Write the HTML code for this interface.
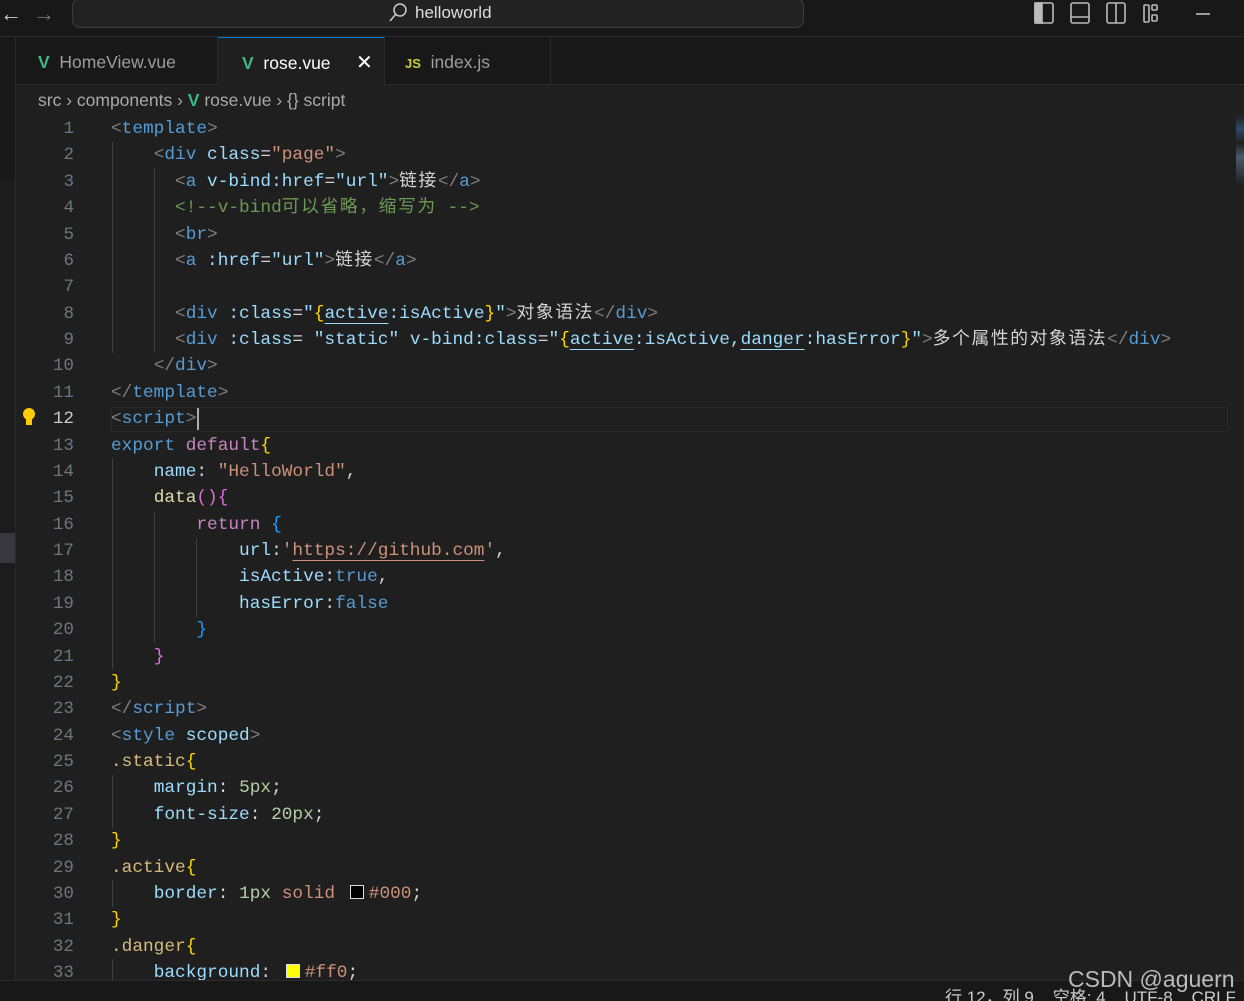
<!DOCTYPE html>
<html><head><meta charset="utf-8"><style>
*{margin:0;padding:0;box-sizing:border-box}
html,body{width:1244px;height:1001px;overflow:hidden}
body{background:#1f1f1f;position:relative;font-family:"Liberation Sans","Noto Sans CJK SC",sans-serif;color:#ccc}
.abs{position:absolute}
#title{left:0;top:0;width:1244px;height:37px;background:#181818;border-bottom:1px solid #2b2b2b}
#search{left:72px;top:-2px;width:732px;height:30px;border:1px solid #3c3c3c;border-radius:8px;background:#222}
#tabs{left:16px;top:37px;width:1228px;height:48px;background:#181818;border-bottom:1px solid #2b2b2b}
.tab{position:absolute;top:0;height:48px;border-right:1px solid #2b2b2b;font-size:17.5px;line-height:50px;color:#9d9d9d}
#side{left:0;top:37px;width:16px;height:944px;background:#1c1c1c;border-right:1px solid #2b2b2b}
#status{left:0;top:980px;width:1244px;height:21px;background:#181818;border-top:1px solid #2b2b2b}
.code{position:absolute;left:0;top:116px;font-family:"Liberation Mono","Noto Sans CJK SC",monospace;font-size:17.8px;line-height:26.375px;white-space:pre;color:#d4d4d4}
.ln{position:absolute;left:20px;width:54px;text-align:right;top:116px;font-family:"Liberation Mono",monospace;font-size:17.6px;line-height:26.375px;color:#6e7681;white-space:pre}
.b{color:#808080}.t{color:#569cd6}.a{color:#9cdcfe}.s{color:#ce9178}.c{color:#6a9955}.k{color:#c586c0}.f{color:#dcdcaa}
.y{color:#ffd700}.p{color:#da70d6}.bl{color:#179fff}.n{color:#b5cea8}.sel{color:#d7ba7d}
.u{text-decoration:underline;text-underline-offset:5px}
.z{letter-spacing:1.6px}
.g{position:absolute;width:1px;background:#404040}
.sw{display:inline-block;width:14px;height:14px;border:1px solid #ddd;vertical-align:-1px;margin-left:4px;margin-right:5px}
</style></head><body>
<div id="title" class="abs"></div>
<div class="abs" style="left:0;top:1px;font-size:22px;color:#ccc">&#8592;</div>
<div class="abs" style="left:33px;top:1px;font-size:22px;color:#777">&#8594;</div>
<div id="search" class="abs"></div>
<svg class="abs" style="left:388px;top:2px" width="20" height="20"><circle cx="12" cy="8" r="6" stroke="#ccc" stroke-width="1.5" fill="none"/><line x1="8" y1="12" x2="2" y2="19" stroke="#ccc" stroke-width="1.5"/></svg>
<div class="abs" style="left:415px;top:3px;font-size:17px;color:#ddd">helloworld</div>
<svg class="abs" style="left:1034px;top:2px" width="180" height="24" fill="none" stroke="#bbb" stroke-width="1.6">
<rect x="1" y="1" width="18" height="20" rx="2"/><rect x="1" y="1" width="7" height="20" fill="#bbb"/>
<rect x="37" y="1" width="18" height="20" rx="2"/><line x1="37" y1="15" x2="55" y2="15"/>
<rect x="73" y="1" width="18" height="20" rx="2"/><line x1="82" y1="1" x2="82" y2="21"/>
<rect x="110" y="3" width="5" height="17" rx="1"/><rect x="118" y="3" width="5" height="5" rx="1"/><rect x="118" y="13" width="5" height="6" rx="1"/>
<line x1="162" y1="12" x2="176" y2="12"/></svg>
<div id="side" class="abs"></div>
<div class="abs" style="left:0;top:37px;width:15px;height:141px;background:#181818"></div>
<div class="abs" style="left:0;top:533px;width:15px;height:30px;background:#37373d"></div>
<div id="tabs" class="abs">
<div class="tab" style="left:0;width:202px;padding-left:22px"><span style="color:#41b883;font-weight:bold">V</span>&nbsp; HomeView.vue</div>
<div class="tab" style="left:202px;width:167px;background:#1f1f1f;border-top:1px solid #0078d4;padding-left:24px;color:#fff;height:49px"><span style="color:#41b883;font-weight:bold">V</span>&nbsp; rose.vue<span style="position:absolute;left:138px;font-size:20px">&#10005;</span></div>
<div class="tab" style="left:369px;width:166px;padding-left:20px"><span style="color:#cbcb41;font-weight:bold;font-size:13px">JS</span>&nbsp; index.js</div>
</div>
<div class="abs" style="left:38px;top:90px;font-size:17.5px;color:#a9a9a9">src &#8250; components &#8250; <span style="color:#41b883;font-weight:bold">V</span> rose.vue &#8250; {} script</div>
<div class="abs" style="left:111px;top:407px;width:1117px;height:25px;border:1px solid #282828"></div>
<div class="abs" style="left:197px;top:408px;width:2px;height:22px;background:#aeafad"></div>
<div class="abs" style="left:22px;top:407px;width:14px;height:20px"><svg width="14" height="20"><circle cx="7" cy="7" r="6" fill="#ffcc00"/><rect x="4" y="12" width="6" height="6" fill="#ffcc00"/></svg></div>
<div class="abs" style="left:1236px;top:115px;width:8px;height:70px;background:linear-gradient(#1f1f1f,#2e4a66 20%,#1f1f1f 40%,#4a5a6a 60%,#1f1f1f)"></div>
<div class="g" style="left:112px;top:142px;height:211px"></div>
<div class="g" style="left:154px;top:168px;height:185px"></div>
<div class="g" style="left:112px;top:458px;height:211px"></div>
<div class="g" style="left:154px;top:511px;height:132px"></div>
<div class="g" style="left:196px;top:538px;height:79px"></div>
<div class="g" style="left:112px;top:775px;height:53px"></div>
<div class="g" style="left:112px;top:880px;height:27px"></div>
<div class="g" style="left:112px;top:959px;height:27px"></div>
<div class="ln">1
2
3
4
5
6
7
8
9
10
11
<span style="color:#ccc">12</span>
13
14
15
16
17
18
19
20
21
22
23
24
25
26
27
28
29
30
31
32
33</div>
<div class="code" style="left:111px"><span class="b">&lt;</span><span class="t">template</span><span class="b">&gt;</span>
    <span class="b">&lt;</span><span class="t">div</span> <span class="a">class</span>=<span class="s">"page"</span><span class="b">&gt;</span>
      <span class="b">&lt;</span><span class="t">a</span> <span class="a">v-bind:href</span>=<span class="a">"url"</span><span class="b">&gt;</span><span class="z">链接</span><span class="b">&lt;/</span><span class="t">a</span><span class="b">&gt;</span>
      <span class="c">&lt;!--v-bind<span class="z">可以省略，缩写为</span> --&gt;</span>
      <span class="b">&lt;</span><span class="t">br</span><span class="b">&gt;</span>
      <span class="b">&lt;</span><span class="t">a</span> <span class="a">:href</span>=<span class="a">"url"</span><span class="b">&gt;</span><span class="z">链接</span><span class="b">&lt;/</span><span class="t">a</span><span class="b">&gt;</span>

      <span class="b">&lt;</span><span class="t">div</span> <span class="a">:class</span>=<span class="a">"</span><span class="y">{</span><span class="a u">active</span><span class="a">:isActive</span><span class="y">}</span><span class="a">"</span><span class="b">&gt;</span><span class="z">对象语法</span><span class="b">&lt;/</span><span class="t">div</span><span class="b">&gt;</span>
      <span class="b">&lt;</span><span class="t">div</span> <span class="a">:class</span>= <span class="a">"static"</span> <span class="a">v-bind:class</span>=<span class="a">"</span><span class="y">{</span><span class="a u">active</span><span class="a">:isActive,</span><span class="a u">danger</span><span class="a">:hasError</span><span class="y">}</span><span class="a">"</span><span class="b">&gt;</span><span class="z">多个属性的对象语法</span><span class="b">&lt;/</span><span class="t">div</span><span class="b">&gt;</span>
    <span class="b">&lt;/</span><span class="t">div</span><span class="b">&gt;</span>
<span class="b">&lt;/</span><span class="t">template</span><span class="b">&gt;</span>
<span class="b">&lt;</span><span class="t">script</span><span class="b">&gt;</span>
<span class="t">export</span> <span class="k">default</span><span class="y">{</span>
    <span class="a">name</span>: <span class="s">"HelloWorld"</span>,
    <span class="f">data</span><span class="p">(){</span>
        <span class="k">return</span> <span class="bl">{</span>
            <span class="a">url</span>:<span class="s">'<span class="u">https://github.com</span>'</span>,
            <span class="a">isActive</span>:<span class="t">true</span>,
            <span class="a">hasError</span>:<span class="t">false</span>
        <span class="bl">}</span>
    <span class="p">}</span>
<span class="y">}</span>
<span class="b">&lt;/</span><span class="t">script</span><span class="b">&gt;</span>
<span class="b">&lt;</span><span class="t">style</span> <span class="a">scoped</span><span class="b">&gt;</span>
<span class="sel">.static</span><span class="y">{</span>
    <span class="a">margin</span>: <span class="n">5px</span>;
    <span class="a">font-size</span>: <span class="n">20px</span>;
<span class="y">}</span>
<span class="sel">.active</span><span class="y">{</span>
    <span class="a">border</span>: <span class="n">1px</span> <span class="s">solid</span> <span class="sw" style="background:#000"></span><span class="s">#000</span>;
<span class="y">}</span>
<span class="sel">.danger</span><span class="y">{</span>
    <span class="a">background</span>: <span class="sw" style="background:#ff0"></span><span class="s">#ff0</span>;</div>
<div id="status" class="abs"></div>
<div class="abs" style="left:945px;top:983px;font-size:17px;color:#ccc;white-space:pre">行 12，列 9    空格: 4    UTF-8    CRLF</div>
<div class="abs" style="left:1068px;top:966px;font-size:23px;color:#bbb">CSDN @aguern</div>
</body></html>
